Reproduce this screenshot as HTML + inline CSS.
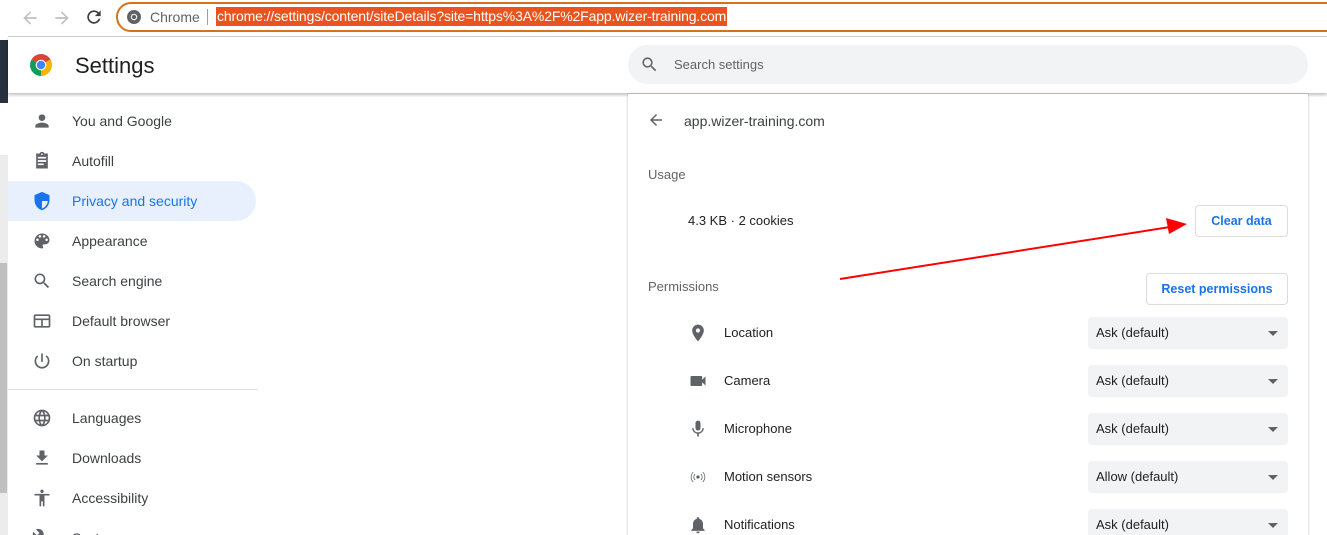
<!DOCTYPE html>
<html><head><meta charset="utf-8"><style>
*{margin:0;padding:0;box-sizing:border-box}
html,body{width:1327px;height:535px;overflow:hidden}
body{background:#fff;font-family:"Liberation Sans",Arial,sans-serif;position:relative;color:#202124}
.abs{position:absolute}
.nav{position:absolute;left:8px;width:248px;height:40px;display:flex;align-items:center;font-size:14px;color:#3c4043}
.nav svg{position:absolute;left:24px;width:20px;height:20px;fill:#5f6368}
.nav span{position:absolute;left:64px}
.sel{background:#e8f0fe;border-radius:0 20px 20px 0;color:#1a73e8}
.sel svg{fill:#1a73e8}
.perm{position:absolute;left:628px;width:680px;height:32px;font-size:13px;color:#202124}
.perm svg{position:absolute;left:60px;top:6px;width:20px;height:20px;fill:#5f6368}
.perm .l{position:absolute;left:96px;top:8px}
.dd{position:absolute;left:460px;top:0;width:200px;height:32px;background:#f1f3f4;border-radius:4px;font-size:13px;padding:8px 8px}
.dd:after{content:"";position:absolute;right:10px;top:14px;border-left:5px solid transparent;border-right:5px solid transparent;border-top:5px solid #5f6368}
.btn{position:absolute;border:1px solid #dadce0;border-radius:4px;color:#1a73e8;font-size:12.5px;font-weight:bold;display:flex;align-items:center;justify-content:center;background:#fff}
</style></head><body>
<div class="abs" style="left:0;top:0;width:1327px;height:36px;background:#fff"></div>
<svg class="abs" style="left:20px;top:8px" width="20" height="20" viewBox="0 0 24 24"><path d="M20 11H7.8l5.6-5.6L12 4l-8 8 8 8 1.4-1.4L7.8 13H20z" fill="#bdc1c6"/></svg>
<svg class="abs" style="left:52px;top:8px" width="20" height="20" viewBox="0 0 24 24"><path d="M4 11h12.2l-5.6-5.6L12 4l8 8-8 8-1.4-1.4 5.6-5.6H4z" fill="#bdc1c6"/></svg>
<svg class="abs" style="left:84px;top:7px" width="20" height="20" viewBox="0 0 24 24"><path d="M17.6 6.4A8 8 0 1 0 19.7 14h-2.1A6 6 0 1 1 12 6c1.7 0 3.1.7 4.2 1.8L13 11h7V4z" fill="#3c4043"/></svg>
<div class="abs" style="left:116px;top:2px;width:1240px;height:30px;border:2px solid #d4731a;border-radius:15px"></div>
<svg class="abs" style="left:126px;top:9px" width="16" height="16" viewBox="0 0 16 16"><circle cx="8" cy="8" r="7" fill="#5f6368"/><circle cx="8" cy="8" r="3.2" fill="#fff"/><circle cx="8" cy="8" r="2.2" fill="#5f6368"/></svg>
<div class="abs" style="left:150px;top:9px;font-size:14px;color:#5f6368">Chrome</div>
<div class="abs" style="left:207px;top:9px;width:1px;height:16px;background:#9aa0a6"></div>
<div class="abs" style="left:216px;top:7px;height:19px;background:#e8531e;color:#fff;font-size:14px;padding:1px 1px;letter-spacing:-0.15px">chrome://settings/content/siteDetails?site=https%3A%2F%2Fapp.wizer-training.com</div>
<div class="abs" style="left:8px;top:36px;width:1319px;height:1px;background:#cfcfcf"></div>
<div class="abs" style="left:0;top:40px;width:8px;height:63px;background:#27313d"></div>
<div class="abs" style="left:8px;top:37px;width:1319px;height:56px;background:#fff;box-shadow:0 2px 3px rgba(0,0,0,.25)"></div>
<svg class="abs" style="left:29px;top:53px" width="24" height="24" viewBox="0 0 24 24"><path d="M12 12 L2.5 6.5 A11 11 0 0 1 21.5 6.5Z" fill="#db4437"/><path d="M12 12 L21.5 6.5 A11 11 0 0 1 12 23Z" fill="#f4b400"/><path d="M12 12 L12 23 A11 11 0 0 1 2.5 6.5Z" fill="#0f9d58"/><circle cx="12" cy="12" r="5.3" fill="#fff"/><circle cx="12" cy="12" r="4.2" fill="#4285f4"/></svg>
<div class="abs" style="left:75px;top:53px;font-size:22px;color:#202124">Settings</div>
<div class="abs" style="left:628px;top:45px;width:680px;height:39px;background:#f1f3f4;border-radius:20px"></div>
<svg class="abs" style="left:640px;top:55px" width="19" height="19" viewBox="0 0 24 24"><path d="M15.5 14h-.79l-.28-.27A6.47 6.47 0 0 0 16 9.5 6.5 6.5 0 1 0 9.5 16c1.61 0 3.09-.59 4.23-1.57l.27.28v.79l5 4.99L20.49 19l-4.99-5zm-6 0C7.01 14 5 11.99 5 9.5S7.01 5 9.5 5 14 7.01 14 9.5 11.99 14 9.5 14z" fill="#5f6368"/></svg>
<div class="abs" style="left:674px;top:57px;font-size:13px;color:#5f6368">Search settings</div>
<div class="abs" style="left:0;top:155px;width:8px;height:380px;background:#ececec"></div>
<div class="abs" style="left:0;top:263px;width:7px;height:230px;background:#c0c0c0"></div>
<div class="nav" style="top:101px"><svg viewBox="0 0 24 24"><path d="M12 12a4 4 0 1 0 0-8 4 4 0 0 0 0 8zm0 2c-2.7 0-8 1.3-8 4v2h16v-2c0-2.7-5.3-4-8-4z"/></svg><span>You and Google</span></div>
<div class="nav" style="top:141px"><svg viewBox="0 0 24 24"><path d="M19 3h-4.2A3 3 0 0 0 9.2 3H5v18h14zM12 3a1 1 0 1 1 0 2 1 1 0 0 1 0-2zm2 14H7v-2h7zm3-4H7v-2h10zm0-4H7V7h10z"/></svg><span>Autofill</span></div>
<div class="nav sel" style="top:181px"><svg viewBox="0 0 24 24"><path d="M12 1 3 5v6c0 5.5 3.8 10.7 9 12 5.2-1.3 9-6.5 9-12V5zm0 11h7c-.5 4.1-3.3 7.8-7 9z"/></svg><span>Privacy and security</span></div>
<div class="nav" style="top:221px"><svg viewBox="0 0 24 24"><path d="M12 3a9 9 0 0 0 0 18c.8 0 1.5-.7 1.5-1.5 0-.4-.1-.7-.4-1-.2-.3-.4-.6-.4-1 0-.8.7-1.5 1.5-1.5H16a5 5 0 0 0 5-5c0-4.4-4-8-9-8zm-5.5 9a1.5 1.5 0 1 1 0-3 1.5 1.5 0 0 1 0 3zm3-4a1.5 1.5 0 1 1 0-3 1.5 1.5 0 0 1 0 3zm5 0a1.5 1.5 0 1 1 0-3 1.5 1.5 0 0 1 0 3zm3 4a1.5 1.5 0 1 1 0-3 1.5 1.5 0 0 1 0 3z"/></svg><span>Appearance</span></div>
<div class="nav" style="top:261px"><svg viewBox="0 0 24 24"><path d="M15.5 14h-.79l-.28-.27A6.47 6.47 0 0 0 16 9.5 6.5 6.5 0 1 0 9.5 16c1.61 0 3.09-.59 4.23-1.57l.27.28v.79l5 4.99L20.49 19l-4.99-5zm-6 0C7.01 14 5 11.99 5 9.5S7.01 5 9.5 5 14 7.01 14 9.5 11.99 14 9.5 14z"/></svg><span>Search engine</span></div>
<div class="nav" style="top:301px"><svg viewBox="0 0 24 24"><path d="M20 4H4a2 2 0 0 0-2 2v12a2 2 0 0 0 2 2h16a2 2 0 0 0 2-2V6a2 2 0 0 0-2-2zM4 6h16v3H4zm0 5h7v7H4zm9 0h7v7h-7z"/></svg><span>Default browser</span></div>
<div class="nav" style="top:341px"><svg viewBox="0 0 24 24"><path d="M13 3h-2v10h2zm4.8 2.2-1.4 1.4A7 7 0 1 1 7.6 6.6L6.2 5.2A9 9 0 1 0 17.8 5.2z"/></svg><span>On startup</span></div>
<div class="abs" style="left:8px;top:389px;width:250px;height:1px;background:#e0e0e0"></div>
<div class="nav" style="top:398px"><svg viewBox="0 0 24 24"><path d="M12 2a10 10 0 1 0 0 20 10 10 0 0 0 0-20zm6.9 6h-3a15.7 15.7 0 0 0-1.3-3.6A8 8 0 0 1 18.9 8zM12 4c.8 1.2 1.5 2.5 1.9 4h-3.8c.4-1.4 1.1-2.8 1.9-4zM4.3 14a8 8 0 0 1 0-4h3.4a16 16 0 0 0 0 4zm.8 2h3c.3 1.300.8 2.5 1.4 3.6A8 8 0 0 1 5.1 16zm3-8h-3a8 8 0 0 1 4.3-3.6C8.8 5.5 8.4 6.7 8.1 8zM12 20c-.8-1.2-1.5-2.5-1.9-4h3.8c-.4 1.4-1.1 2.8-1.9 4zm2.3-6H9.7a14.7 14.7 0 0 1 0-4h4.6a14.7 14.7 0 0 1 0 4zm.3 5.6c.6-1.1 1.1-2.3 1.4-3.6h3a8 8 0 0 1-4.4 3.6zm1.7-5.6a16 16 0 0 0 0-4h3.4a8 8 0 0 1 0 4z"/></svg><span>Languages</span></div>
<div class="nav" style="top:438px"><svg viewBox="0 0 24 24"><path d="M19 9h-4V3H9v6H5l7 7zM5 18v2h14v-2z"/></svg><span>Downloads</span></div>
<div class="nav" style="top:478px"><svg viewBox="0 0 24 24"><path d="M12 2a2 2 0 1 1 0 4 2 2 0 0 1 0-4zm9 7h-6v13h-2v-6h-2v6H9V9H3V7h18z"/></svg><span>Accessibility</span></div>
<div class="nav" style="top:518px"><svg viewBox="0 0 24 24"><path d="M22.7 19l-9.1-9.1c.9-2.3.4-5-1.5-6.9-2-2-5-2.4-7.4-1.3L9 6 6 9 1.6 4.7C.4 7.1.9 10.1 2.9 12.1c1.9 1.9 4.6 2.4 6.9 1.5l9.1 9.1z"/></svg><span>System</span></div>
<div class="abs" style="left:628px;top:94px;width:680px;height:460px;background:#fff;box-shadow:0 0 2px rgba(0,0,0,.3)"></div>
<svg class="abs" style="left:647px;top:111px" width="18" height="18" viewBox="0 0 24 24"><path d="M20 11H7.8l5.6-5.6L12 4l-8 8 8 8 1.4-1.4L7.8 13H20z" fill="#5f6368"/></svg>
<div class="abs" style="left:684px;top:113px;font-size:14px;color:#3c4043">app.wizer-training.com</div>
<div class="abs" style="left:648px;top:167px;font-size:13px;color:#5f6368">Usage</div>
<div class="abs" style="left:688px;top:213px;font-size:13px;color:#202124">4.3 KB · 2 cookies</div>
<div class="btn" style="left:1195px;top:205px;width:93px;height:32px">Clear data</div>
<div class="abs" style="left:648px;top:279px;font-size:13px;color:#5f6368">Permissions</div>
<div class="btn" style="left:1146px;top:273px;width:142px;height:32px">Reset permissions</div>
<div class="perm" style="top:317px"><svg viewBox="0 0 24 24"><path d="M12 2a7 7 0 0 0-7 7c0 5.3 7 13 7 13s7-7.7 7-13a7 7 0 0 0-7-7zm0 9.5a2.5 2.5 0 1 1 0-5 2.5 2.5 0 0 1 0 5z"/></svg><div class="l">Location</div><div class="dd">Ask (default)</div></div>
<div class="perm" style="top:365px"><svg viewBox="0 0 24 24"><path d="M17 10.5V7a1 1 0 0 0-1-1H4a1 1 0 0 0-1 1v10a1 1 0 0 0 1 1h12a1 1 0 0 0 1-1v-3.5l4 4v-11z"/></svg><div class="l">Camera</div><div class="dd">Ask (default)</div></div>
<div class="perm" style="top:413px"><svg viewBox="0 0 24 24"><path d="M12 14a3 3 0 0 0 3-3V5a3 3 0 0 0-6 0v6a3 3 0 0 0 3 3zm5.3-3c0 3-2.5 5.1-5.3 5.1S6.7 14 6.7 11H5c0 3.4 2.7 6.2 6 6.7V21h2v-3.3c3.3-.5 6-3.3 6-6.7z"/></svg><div class="l">Microphone</div><div class="dd">Ask (default)</div></div>
<div class="perm" style="top:461px"><svg viewBox="0 0 24 24"><circle cx="12" cy="12" r="2"/><path d="M7.8 7.5 6.9 6.6a7.5 7.5 0 0 0 0 10.8l.9-.9a6.2 6.2 0 0 1 0-9zM17.1 6.6l-.9.9a6.2 6.2 0 0 1 0 9l.9.9a7.5 7.5 0 0 0 0-10.8zM4.8 4.6 3.9 3.7a11.5 11.5 0 0 0 0 16.6l.9-.9a10.2 10.2 0 0 1 0-14.8zM20.1 3.7l-.9.9a10.2 10.2 0 0 1 0 14.8l.9.9a11.5 11.5 0 0 0 0-16.6z" transform="translate(12 12) scale(.75) translate(-12 -12)"/></svg><div class="l">Motion sensors</div><div class="dd">Allow (default)</div></div>
<div class="perm" style="top:509px"><svg viewBox="0 0 24 24"><path d="M12 22a2 2 0 0 0 2-2h-4a2 2 0 0 0 2 2zm6-6v-5c0-3.1-1.6-5.6-4.5-6.3V4a1.5 1.5 0 0 0-3 0v.7C7.6 5.4 6 7.9 6 11v5l-2 2v1h16v-1z"/></svg><div class="l">Notifications</div><div class="dd">Ask (default)</div></div>
<svg class="abs" style="left:0;top:0" width="1327" height="535"><line x1="840" y1="279" x2="1170" y2="227" stroke="#f00" stroke-width="2"/><polygon points="1187,224 1166,218 1169,234" fill="#f00"/></svg>
</body></html>
